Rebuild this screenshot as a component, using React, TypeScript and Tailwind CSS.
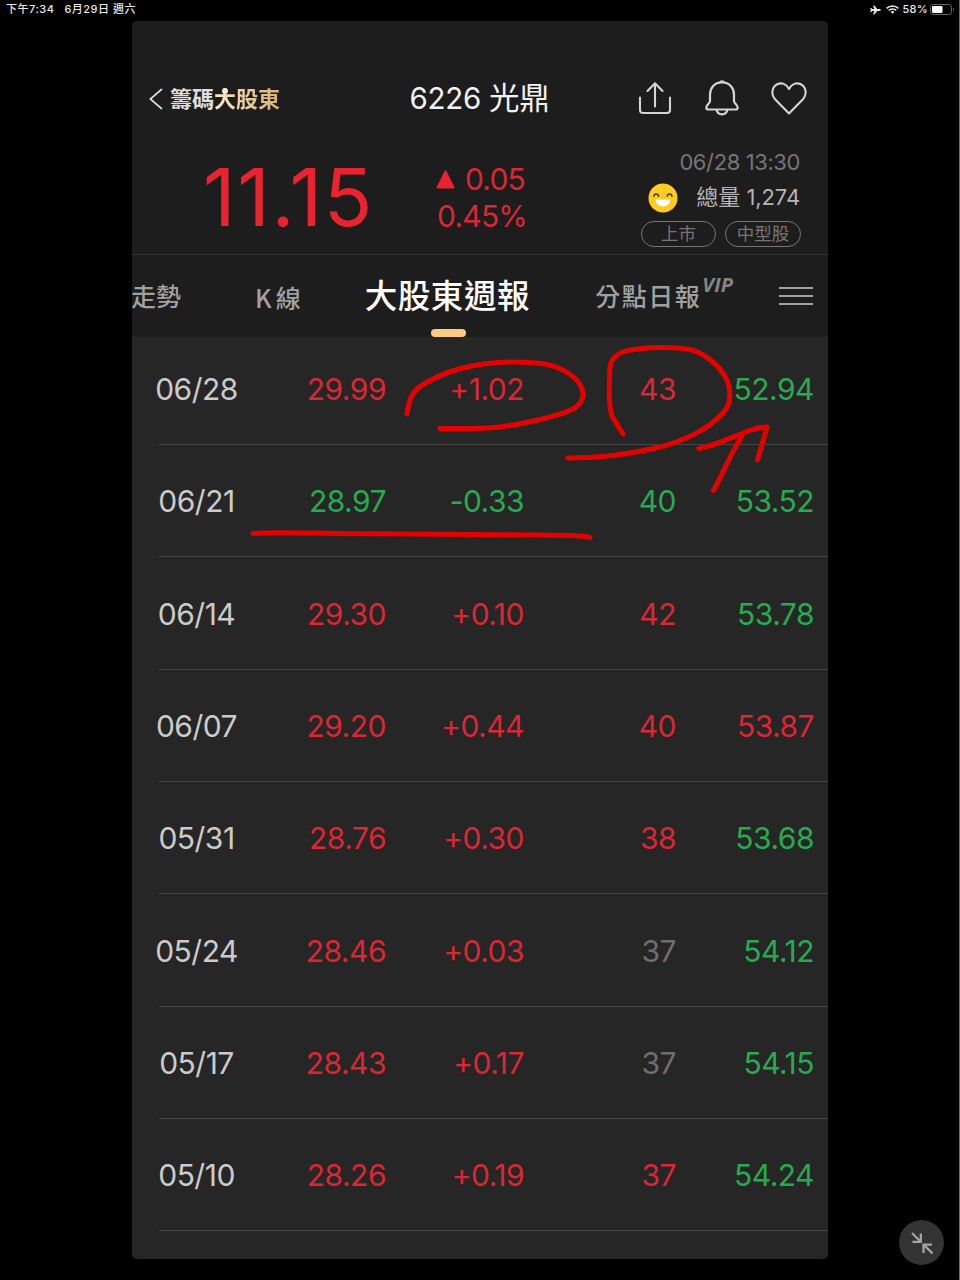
import React from 'react';

type Trend = 'UP' | 'DOWN' | 'FLAT';

interface Cell {
  value: string;
  trend: Trend;
}

interface WeeklyRecord {
  date: string;
  ratio: Cell;
  change: Cell;
  holders: Cell;
  retail: Cell;
}

const up = (value: string): Cell => ({ value, trend: 'UP' });
const down = (value: string): Cell => ({ value, trend: 'DOWN' });
const flat = (value: string): Cell => ({ value, trend: 'FLAT' });

const records: WeeklyRecord[] = [
  { date: '06/28', ratio: up('29.99'), change: up('+1.02'), holders: up('43'), retail: down('52.94') },
  { date: '06/21', ratio: down('28.97'), change: down('-0.33'), holders: down('40'), retail: down('53.52') },
  { date: '06/14', ratio: up('29.30'), change: up('+0.10'), holders: up('42'), retail: down('53.78') },
  { date: '06/07', ratio: up('29.20'), change: up('+0.44'), holders: up('40'), retail: up('53.87') },
  { date: '05/31', ratio: up('28.76'), change: up('+0.30'), holders: up('38'), retail: down('53.68') },
  { date: '05/24', ratio: up('28.46'), change: up('+0.03'), holders: flat('37'), retail: down('54.12') },
  { date: '05/17', ratio: up('28.43'), change: up('+0.17'), holders: flat('37'), retail: down('54.15') },
  { date: '05/10', ratio: up('28.26'), change: up('+0.19'), holders: up('37'), retail: down('54.24') },
];

const trendColor: Record<Trend, string> = {
  UP: 'text-[#dc2633]',
  DOWN: 'text-[#27ab4f]',
  FLAT: 'text-[#6e6e6e]',
};

const StatusBar: React.FC = () => (
  <div className="flex h-[21px] shrink-0 items-start justify-between pl-1.5 pr-1 text-[11px] font-medium text-[#e8e8e8]">
    <div className="flex h-[19px] items-center gap-[10px] tracking-[0.5px]">
      <span>下午7:34</span>
      <span>6月29日 週六</span>
    </div>
    <div className="flex h-[19px] items-center">
      <svg className="h-[10px] w-[11px]" viewBox="0 0 11 10" fill="#e8e8e8">
        <path d="M10.8 5c0-.6-.6-.9-1.300-.9H7.200L4.500.4H3.100l1.200 3.700H2.200L1.200 2.900H.2L.8 5 .2 7.100h1l1-1.200h2.100L3.100 9.600h1.400L7.200 5.900h2.300c.7 0 1.300-.3 1.300-.9z" />
      </svg>
      <svg className="ml-[5px] h-[9px] w-[13px]" viewBox="0 0 13 9" fill="none" stroke="#e8e8e8" strokeWidth="1.6">
        <path d="M.6 3.4a8.4 8.4 0 0 1 11.8 0" />
        <path d="M2.7 5.5a5.4 5.4 0 0 1 7.6 0" />
        <path d="M6.5 8.8 4.6 6.900a2.700 2.700 0 0 1 3.800 0z" fill="#e8e8e8" stroke="none" />
      </svg>
      <span className="ml-[3px] tracking-[0.3px]">58%</span>
      <svg className="ml-[2px] h-[11px] w-[25px]" viewBox="0 0 25 11">
        <rect x=".5" y=".5" width="21" height="10" rx="2.8" fill="none" stroke="#666" />
        <rect x="2" y="2" width="10.500" height="7" rx="1.300" fill="#fff" />
        <path d="M23 3.600c1.300.5 1.300 3.300 0 3.800z" fill="#666" />
      </svg>
    </div>
  </div>
);

const GrinFace: React.FC = () => (
  <svg className="h-[30px] w-[30px]" viewBox="0 0 30 30" fill="none">
    <circle cx="15" cy="15" r="14.500" fill="#fdcb22" />
    <path d="M5.800 13.300c.4-3 4.400-3 4.800 0M19.200 13.300c.4-3 4.400-3 4.800 0" stroke="#4b3a1c" strokeWidth="1.400" strokeLinecap="round" />
    <path d="M7.800 16.600h14.400c0 4.300-3 6.800-7.200 6.800s-7.200-2.500-7.200-6.800z" fill="#fff" />
  </svg>
);

const StockHeader: React.FC = () => (
  <header className="h-[234px] shrink-0 border-b border-[#333] bg-[#1d1d1d] pt-[53px]">
    <div className="grid h-12 grid-cols-[1fr_auto_1fr] items-center pl-[17px] pr-[21px]">
      <button className="flex items-center pt-px">
        <svg className="h-[22px] w-[14px]" viewBox="0 0 14 22" fill="none" stroke="#d8d8d8" strokeWidth="1.700">
          <path d="M13 1 1.300 11 13 21" />
        </svg>
        <span className="ml-[7px] flex text-[22px] font-bold leading-none">
          <span className="text-[#dedede]">籌碼</span>
          <span className="relative bg-gradient-to-r from-[#fae9cb] to-[#d9b172] bg-clip-text text-transparent">
            大股東
            <i className="absolute left-[8px] top-0 h-[6px] w-[6px] rounded-full bg-[#fae9cb]" />
          </span>
        </span>
      </button>
      <h1 className="ml-[3px] text-[29.500px] font-normal tracking-[-0.3px] text-[#f2f2f2]">
        6226 <span className="text-[30.500px]">光鼎</span>
      </h1>
      <div className="flex items-center justify-end gap-[31px]">
        <svg className="h-9 w-9" viewBox="0 0 36 36" fill="none" stroke="#d4d4d4" strokeWidth="2.100" strokeLinecap="round" strokeLinejoin="round">
          <path d="M3 17.500V30a3 3 0 0 0 3 3h24a3 3 0 0 0 3-3V17.500M18 26.500V3.500M10.500 11 18 3.300 25.500 11" />
        </svg>
        <svg className="h-9 w-9" viewBox="0 0 36 36" fill="none" stroke="#d4d4d4" strokeWidth="2.200" strokeLinejoin="round">
          <path d="M16 2.500c.5-1.600 3.500-1.600 4 0M18 2.300C10.500 2.300 6 7.800 6 14.500V21c0 2.600-3.700 3.400-3.700 6.500 0 1.300.8 2 2 2h27.400c1.200 0 2-.7 2-2 0-3.100-3.700-3.900-3.700-6.500v-6.500c0-6.700-4.500-12.200-12-12.200zM12.500 29.500c.6 3.200 2.700 4.800 5.500 4.800s4.900-1.600 5.500-4.800" />
        </svg>
        <svg className="h-9 w-9" viewBox="0 0 36 36" fill="none" stroke="#d4d4d4" strokeWidth="2.100" strokeLinejoin="round">
          <path d="M18 33.500 3.800 19C-.3 14.200 1 6.700 6.200 4.200 10.500 2.200 15.500 3.700 18 9c2.500-5.300 7.500-6.800 11.800-4.800 5.200 2.500 6.500 10 2.400 14.800z" />
        </svg>
      </div>
    </div>

    {/* Quote */}
    <div className="flex h-[131px] pr-[28px]">
      <div className="w-[242px] whitespace-nowrap pt-[26px] text-right text-[80px] leading-[98px] tracking-[1.700px] text-[#ea2330]">11.15</div>
      <div className="ml-[62px] w-[89px] pt-[39px] text-right text-[30px] leading-[37px] tracking-[-0.8px] text-[#dc2633]">
        <div className="flex items-center justify-between">
          <svg className="h-[19px] w-[19px]" viewBox="0 0 19 19">
            <path d="M9.500 1.500 17.500 17.500H1.500z" fill="#ea2330" stroke="#ea2330" strokeWidth="2" strokeLinejoin="round" />
          </svg>
          <span>0.05</span>
        </div>
        <div className="-mr-0.5">0.45%</div>
      </div>
      <div className="ml-auto flex flex-col items-end pt-[26px]">
        <div className="text-[22px] leading-[28px] tracking-[-0.4px] text-[#757575]">06/28 13:30</div>
        <div className="flex h-[43px] items-center gap-[18px] text-[22px] text-[#b4b4b4]">
          <GrinFace />
          <span>總量 <span className="tracking-[-0.1px]">1,274</span></span>
        </div>
        <div className="mt-0.5 flex gap-[9px] text-[17.500px] leading-none text-[#757575]">
          <span className="flex h-[26px] w-[75px] items-center justify-center rounded-full border border-[#757575]">上市</span>
          <span className="-mr-px flex h-[26px] w-[76px] items-center justify-center rounded-full border border-[#757575]">中型股</span>
        </div>
      </div>
    </div>
  </header>
);

const TabBar: React.FC = () => (
  <nav className="flex h-[82px] shrink-0 items-center bg-[#1d1d1d] pt-[3px] text-[25px] font-medium tracking-[1px] text-[#a0a0a0]">
    <span className="-ml-px tracking-normal">走勢</span>
    <span className="ml-[74px] flex gap-[3px] font-['Noto_Sans_CJK_TC']">
      <span>K</span>
      <span>線</span>
    </span>
    <div className="relative ml-[63px] flex h-full items-center text-[32.500px] tracking-[0.6px] text-white">
      大股東週報
      <i className="absolute bottom-0 left-[66px] h-2 w-[35px] rounded-full bg-[#fdca84]" />
    </div>
    <div className="ml-[65px] flex items-center">
      <span className="tracking-[1.500px]">分點日報</span>
      <span className="-mt-[26px] ml-px font-['Open_Sans'] text-[20px] font-bold italic leading-none tracking-[0.2px] text-[#858585]">VIP</span>
    </div>
    <button className="-mt-[3px] ml-auto mr-[15px] flex w-[34px] flex-col gap-[6px]">
      <i className="h-0.5 bg-[#a0a0a0]" />
      <i className="h-0.5 bg-[#a0a0a0]" />
      <i className="h-0.5 bg-[#a0a0a0]" />
    </button>
  </nav>
);

const RecordRow: React.FC<{ record: WeeklyRecord }> = ({ record }) => (
  <div className="ml-[27px] grid h-[112.330px] shrink-0 grid-cols-[75px_152px_138px_152px_138px] items-center border-b border-[#454545] pt-[2.500px] text-right text-[30px] tracking-[-0.5px]">
    <div className="flex justify-center whitespace-nowrap text-[#cbcbcb]">{record.date}</div>
    <div className={trendColor[record.ratio.trend]}>{record.ratio.value}</div>
    <div className={trendColor[record.change.trend]}>{record.change.value}</div>
    <div className={trendColor[record.holders.trend]}>{record.holders.value}</div>
    <div className={trendColor[record.retail.trend]}>{record.retail.value}</div>
  </div>
);

// Red pen marks drawn over the table
const PenMarks: React.FC = () => (
  <svg
    className="pointer-events-none absolute left-0 top-0 h-[1280px] w-[960px]"
    viewBox="0 0 960 1280"
    fill="none"
    stroke="#e30200"
    strokeWidth="5"
    strokeLinecap="round"
    strokeLinejoin="round"
  >
    <path d="M407 414C408 404 411 394 418 388C443 370 478 362 512 362C544 362 557 365 571 375C586 386 587 401 573 409C559 416 523 424 500 427C482 429 460 428.500 440 428.500" />
    <path d="M623 434L612 416C609 408 609 386 610 367C611 355 624 350 638 349C655 347 680 347 692 350C708 355 725 370 729 386C731 398 730 405 723 413C706 431 685 440 660 447C632 454 602 458 568 458" />
    <path d="M253 533.500C270 532 300 533 340 533.500C410 534.500 480 534 540 535C570 535.500 584 535 590 537.500" />
    <path d="M699 448.500C718 445 736 435 751 430C757 428 762 427 767 427L757.500 460M713.500 490.500C721 477 731 453 742 436" />
  </svg>
);

export default function App() {
  return (
    <div className="relative flex h-[1280px] w-[960px] flex-col overflow-hidden border-r border-[#6b6b6b] bg-black font-['Inter','Noto_Sans_CJK_TC',sans-serif]">
      <StatusBar />
      <main className="ml-[132px] flex h-[1238px] w-[696px] flex-col overflow-hidden rounded-[5px] bg-[#262626]">
        <StockHeader />
        <TabBar />
        <div className="-mt-[4.400px] flex flex-col">
          {records.map((record) => (
            <RecordRow key={record.date} record={record} />
          ))}
        </div>
      </main>
      <PenMarks />
      <button className="absolute bottom-[15px] right-[15px] flex h-[45px] w-[45px] items-center justify-center rounded-full bg-[#333]">
        <svg className="h-[22px] w-[22px]" viewBox="0 0 22 22" fill="none" stroke="#a3a3a3" strokeWidth="2.300">
          <path d="M1 1l8.500 8.500M9.800 1.500v8.300H1.500M21.500 21.500 13 13M12.500 21v-8.300H21" />
        </svg>
      </button>
    </div>
  );
}
